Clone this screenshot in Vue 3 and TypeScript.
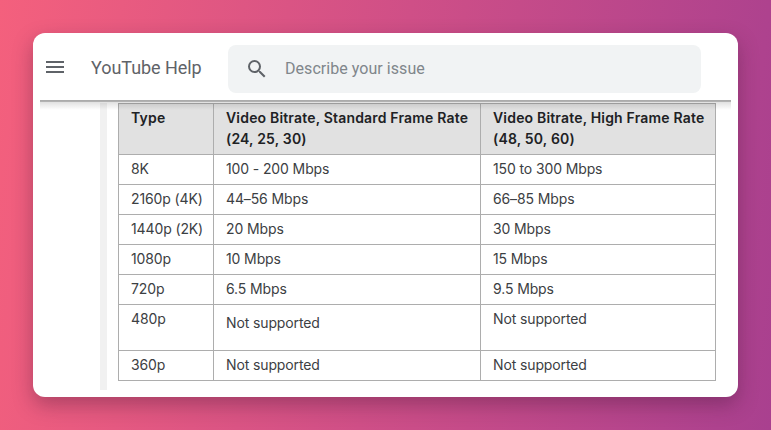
<script setup lang="ts">
interface Row { type: string; std: string; high: string; tall?: boolean }
const rows: Row[] = [
  { type: '8K', std: '100 - 200 Mbps', high: '150 to 300 Mbps' },
  { type: '2160p (4K)', std: '44–56 Mbps', high: '66–85 Mbps' },
  { type: '1440p (2K)', std: '20 Mbps', high: '30 Mbps' },
  { type: '1080p', std: '10 Mbps', high: '15 Mbps' },
  { type: '720p', std: '6.5 Mbps', high: '9.5 Mbps' },
  { type: '480p', std: 'Not supported', high: 'Not supported', tall: true },
  { type: '360p', std: 'Not supported', high: 'Not supported' },
]
</script>

<template>
  <div class="page">
    <div class="card">
      <header class="top">
        <svg class="menu" width="24" height="24" viewBox="0 0 24 24" fill="#5f6368"><path d="M3 18h18v-2H3v2zm0-5h18v-2H3v2zm0-7v2h18V6H3z"/></svg>
        <div class="title">YouTube Help</div>
        <div class="search">
          <svg width="24" height="24" viewBox="0 0 24 24" fill="#5f6368"><path d="M15.5 14h-.79l-.28-.27A6.47 6.47 0 0 0 16 9.5 6.5 6.5 0 1 0 9.5 16c1.61 0 3.09-.59 4.23-1.57l.27.28v.79l5 4.99L20.49 19l-4.99-5zm-6 0C7.01 14 5 11.99 5 9.5S7.01 5 9.5 5 14 7.01 14 9.5 11.99 14 9.5 14z"/></svg>
          <span class="placeholder">Describe your issue</span>
        </div>
      </header>
      <div class="body">
        <div class="article">
          <table>
            <thead>
              <tr>
                <th class="c1">Type</th>
                <th class="c2">Video Bitrate, Standard Frame Rate (24, 25, 30)</th>
                <th class="c3">Video Bitrate, High Frame Rate (48, 50, 60)</th>
              </tr>
            </thead>
            <tbody>
              <tr v-for="r in rows" :key="r.type" :class="{ tall: r.tall }">
                <td>{{ r.type }}</td>
                <td class="std">{{ r.std }}</td>
                <td>{{ r.high }}</td>
              </tr>
            </tbody>
          </table>
        </div>
      </div>
    </div>
  </div>
</template>

<style>
html, body { margin: 0; }
</style>

<style scoped>
.page {
  width: 771px;
  height: 430px;
  box-sizing: border-box;
  padding: 33px;
  overflow: hidden;
  background: linear-gradient(97deg, #f4607d 0%, #cf4f87 50%, #a9408f 100%);
}
.card {
  width: 705px;
  height: 364px;
  background: #fff;
  border-radius: 12px;
  box-shadow: 0 8px 20px rgba(60, 20, 50, 0.35);
  overflow: hidden;
  display: flex;
  flex-direction: column;
}
.top {
  height: 68px;
  flex: none;
  display: flex;
  align-items: center;
  padding-left: 10px;
  position: relative;
}
.top::after {
  content: '';
  position: absolute;
  left: 7px;
  right: 7px;
  top: 67px;
  height: 10px;
  background: linear-gradient(#a8a8a8 0, #b4b4b4 2px, rgba(0,0,0,.12) 2px, rgba(0,0,0,0) 100%);
  z-index: 2;
}
.menu { flex: none; }
.title {
  margin-left: 24px;
  margin-top: 2px;
  width: 137px;
  flex: none;
  font: 400 18px/24px Roboto, sans-serif;
  letter-spacing: -0.05px;
  color: #5f6368;
  white-space: nowrap;
}
.search {
  width: 473px;
  height: 48px;
  flex: none;
  box-sizing: border-box;
  margin-top: 4px;
  padding-left: 17px;
  display: flex;
  align-items: center;
  gap: 16px;
  background: #f1f3f4;
  border-radius: 8px;
}
.placeholder {
  font: 400 16px/24px Roboto, sans-serif;
  letter-spacing: 0.05px;
  color: #80868b;
}
.body {
  flex: 1;
  padding-left: 67px;
  box-sizing: border-box;
}
.article {
  height: 287px;
  box-sizing: border-box;
  margin-top: 2px;
  padding-left: 11px;
  border-left: 7px solid #f1f1f1;
}
table {
  border-collapse: collapse;
  table-layout: fixed;
  width: 597px;
  font: 400 14px/21px Inter, sans-serif;
  letter-spacing: -0.12px;
  color: #3c4043;
}
th, td {
  border: 1px solid #adadad;
  padding: 3px 12px;
  text-align: left;
  vertical-align: top;
  box-sizing: border-box;
  height: 30px;
}
td { white-space: nowrap; }
th {
  height: 51px;
  padding-right: 0;
  background: #e1e1e1;
  font-weight: 600;
  letter-spacing: 0.18px;
  color: #202124;
}
.c1 { width: 95px; }
.c2 { width: 267px; }
.c3 { width: 235px; }
.tall td { height: 46px; }
.tall .std { padding-top: 7px; }
</style>
